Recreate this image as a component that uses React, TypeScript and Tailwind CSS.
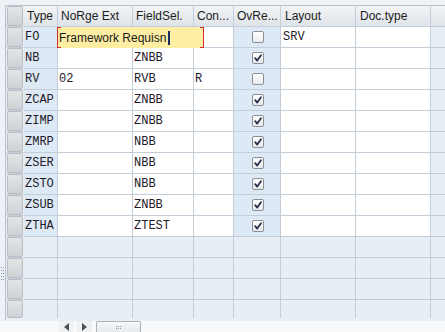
import React from "react";

type Row = { t: string; n?: string; f?: string; c?: string; o?: boolean; l?: string; d?: string };

const rows: Row[] = [
  { t: "FO", o: false, l: "SRV" },
  { t: "NB", f: "ZNBB", o: true },
  { t: "RV", n: "02", f: "RVB", c: "R", o: false },
  { t: "ZCAP", f: "ZNBB", o: true },
  { t: "ZIMP", f: "ZNBB", o: true },
  { t: "ZMRP", f: "NBB", o: true },
  { t: "ZSER", f: "NBB", o: true },
  { t: "ZSTO", f: "NBB", o: true },
  { t: "ZSUB", f: "ZNBB", o: true },
  { t: "ZTHA", f: "ZTEST", o: true },
];

const mono = { fontFamily: '"Liberation Mono", monospace' } as const;

function SelBtn({ h }: { h: string }) {
  return (
    <div className="w-[18px] shrink-0 flex items-stretch">
      <div
        className={`ml-[1px] w-[16px] ${h} rounded-[2px] border border-[#b9bec4] bg-gradient-to-b from-[#e2e4e6] to-[#cfd2d5]`}
      />
    </div>
  );
}

function Check({ on }: { on: boolean }) {
  return (
    <div className="w-[12px] h-[12px] rounded-[2px] border border-[#8c9096] bg-gradient-to-b from-[#ffffff] to-[#e9eaec] flex items-center justify-center">
      {on && (
        <svg width="10" height="10" viewBox="0 0 10 10">
          <path d="M2.2 5.2 L4.2 7.6 L8 2.2" fill="none" stroke="#28314a" strokeWidth="1.8" strokeLinecap="round" strokeLinejoin="round" />
        </svg>
      )}
    </div>
  );
}

function DataRow({ r }: { r: Row }) {
  return (
    <div className="flex h-[21px] border-b border-[#c5ced8]">
      <div className="w-[18px] shrink-0 flex py-[0px]">
        <div className="ml-[1px] w-[16px] h-[20px] rounded-[2px] border border-[#b9bec4] bg-gradient-to-b from-[#e2e4e6] to-[#cfd2d5]" />
      </div>
      <div className="w-[34px] shrink-0 border-r border-[#c5ced8] bg-[#dde9f4] pl-[1px] flex items-center text-[12px] text-[#241a2a]" style={mono}>{r.t}</div>
      <div className="w-[75px] shrink-0 border-r border-[#c5ced8] bg-white pl-[1px] flex items-center text-[12px] text-[#241a2a]" style={mono}>{r.n}</div>
      <div className="w-[61px] shrink-0 border-r border-[#c5ced8] bg-white pl-[1px] flex items-center text-[12px] text-[#241a2a]" style={mono}>{r.f}</div>
      <div className="w-[40px] shrink-0 border-r border-[#c5ced8] bg-white pl-[1px] flex items-center text-[12px] text-[#241a2a]" style={mono}>{r.c}</div>
      <div className="w-[47px] shrink-0 border-r border-[#c5ced8] bg-[#dde9f4] flex items-center justify-center pl-[1px]">
        <Check on={!!r.o} />
      </div>
      <div className="w-[75px] shrink-0 border-r border-[#c5ced8] bg-white pl-[2px] flex items-center text-[12px] text-[#241a2a]" style={mono}>{r.l}</div>
      <div className="w-[75px] shrink-0 border-r border-[#c5ced8] bg-white pl-[2px] flex items-center text-[12px] text-[#241a2a]" style={mono}>{r.d}</div>
    </div>
  );
}

function EmptyRow({ last }: { last?: boolean }) {
  return (
    <div className={last ? "flex h-[18px]" : "flex h-[21px] border-b border-[#c5ced8]"}>
      <div className="w-[18px] shrink-0 flex">
        <div className={`ml-[1px] w-[16px] ${last ? "h-[18px]" : "h-[20px]"} rounded-[2px] border border-[#b9bec4] bg-gradient-to-b from-[#e2e4e6] to-[#cfd2d5]`} />
      </div>
      <div className="w-[34px] shrink-0 border-r border-[#c5ced8]" />
      <div className="w-[75px] shrink-0 border-r border-[#c5ced8]" />
      <div className="w-[61px] shrink-0 border-r border-[#c5ced8]" />
      <div className="w-[40px] shrink-0 border-r border-[#c5ced8]" />
      <div className="w-[47px] shrink-0 border-r border-[#c5ced8]" />
      <div className="w-[75px] shrink-0 border-r border-[#c5ced8]" />
      <div className="w-[75px] shrink-0 border-r border-[#c5ced8]" />
    </div>
  );
}

export default function App() {
  const hdr =
    "shrink-0 border-r border-[#c5ced8] flex items-center pl-[3px] text-[12px] text-[#1c1c1c] whitespace-nowrap overflow-hidden";
  return (
    <div
      className="w-[445px] h-[332px] bg-[#e8eef5] flex flex-col overflow-hidden"
      style={{ fontFamily: '"Liberation Sans", Arial, sans-serif' }}
    >
      <div className="h-[5px] shrink-0 bg-[#eef2f7]" />
      <div className="flex h-[315px] shrink-0">
        <div className="w-[5px] shrink-0 relative bg-[#eef2f7]">
          <div className="absolute left-[1px] top-[262px] flex flex-col gap-[2px]">
            <div className="w-[1px] h-[1px] bg-[#8a96a3]" />
            <div className="w-[1px] h-[1px] bg-[#8a96a3]" />
            <div className="w-[1px] h-[1px] bg-[#8a96a3]" />
            <div className="w-[1px] h-[1px] bg-[#8a96a3]" />
            <div className="w-[1px] h-[1px] bg-[#8a96a3]" />
          </div>
          <div className="absolute left-[3px] top-[262px] flex flex-col gap-[2px]">
            <div className="w-[1px] h-[1px] bg-[#8a96a3]" />
            <div className="w-[1px] h-[1px] bg-[#8a96a3]" />
            <div className="w-[1px] h-[1px] bg-[#8a96a3]" />
            <div className="w-[1px] h-[1px] bg-[#8a96a3]" />
            <div className="w-[1px] h-[1px] bg-[#8a96a3]" />
          </div>
        </div>
        <div className="flex-1 border-l border-t border-[#b7c2cd] relative">
          {/* header */}
          <div className="flex h-[21px] border-b border-[#c5ced8] bg-gradient-to-b from-[#f2f4f6] to-[#dfe4e9]">
            <SelBtn h="h-[20px]" />
            <div className={`${hdr} w-[34px]`}>Type</div>
            <div className={`${hdr} w-[75px]`}>NoRge Ext</div>
            <div className={`${hdr} w-[61px]`}>FieldSel.</div>
            <div className={`${hdr} w-[40px]`}>Con...</div>
            <div className={`${hdr} w-[47px]`}>OvRe...</div>
            <div className={`${hdr} w-[75px] pl-[4px]`}>Layout</div>
            <div className={`${hdr} w-[75px] pl-[4px]`}>Doc.type</div>
          </div>
          {rows.map((r) => (
            <DataRow key={r.t} r={r} />
          ))}
          <EmptyRow />
          <EmptyRow />
          <EmptyRow />
          <EmptyRow last />

          {/* editor overlay */}
          <div className="absolute left-[51px] top-[21px] w-[146px] h-[21px] bg-[#fdeea3] flex items-center pl-[2px] text-[12px] text-[#1a1a1a] whitespace-nowrap">
            Framework Requisn
            <div className="w-[2px] h-[14px] bg-[#1c2a6a] ml-[2px]" />
            <div className="absolute left-0 top-0 w-[1px] h-[21px] bg-[#d42a2a]" />
            <div className="absolute left-0 top-0 w-[4px] h-[1px] bg-[#d42a2a]" />
            <div className="absolute left-0 bottom-0 w-[4px] h-[1px] bg-[#d42a2a]" />
            <div className="absolute right-[-1px] top-0 w-[1px] h-[21px] bg-[#d42a2a]" />
            <div className="absolute right-[-1px] top-0 w-[4px] h-[1px] bg-[#d42a2a]" />
            <div className="absolute right-[-1px] bottom-0 w-[4px] h-[1px] bg-[#d42a2a]" />
          </div>
        </div>
      </div>
      <div className="h-[1px] shrink-0" />
      <div className="flex-1 bg-[#f8f9fa] flex items-end pl-[59px] gap-[4px]">
        <div className="w-[14px] h-[11px] bg-[#eef0f2] flex items-center justify-center">
          <svg width="5" height="8" viewBox="0 0 5 8">
            <path d="M5 0 L0 4 L5 8 Z" fill="#4a5058" />
          </svg>
        </div>
        <div className="w-[15px] h-[11px] bg-[#eef0f2] flex items-center justify-center">
          <svg width="5" height="8" viewBox="0 0 5 8">
            <path d="M0 0 L5 4 L0 8 Z" fill="#4a5058" />
          </svg>
        </div>
        <div className="w-[45px] h-[11px] rounded-t-[2px] border border-b-0 border-[#a7b2bd] bg-gradient-to-b from-[#f6f8fa] to-[#e6eaee] flex items-center justify-center">
          <div className="grid grid-cols-3 gap-[1px]">
            <div className="w-[1px] h-[1px] bg-[#8d98a4]" />
            <div className="w-[1px] h-[1px] bg-[#8d98a4]" />
            <div className="w-[1px] h-[1px] bg-[#8d98a4]" />
            <div className="w-[1px] h-[1px] bg-[#8d98a4]" />
            <div className="w-[1px] h-[1px] bg-[#8d98a4]" />
            <div className="w-[1px] h-[1px] bg-[#8d98a4]" />
          </div>
        </div>
      </div>
    </div>
  );
}
